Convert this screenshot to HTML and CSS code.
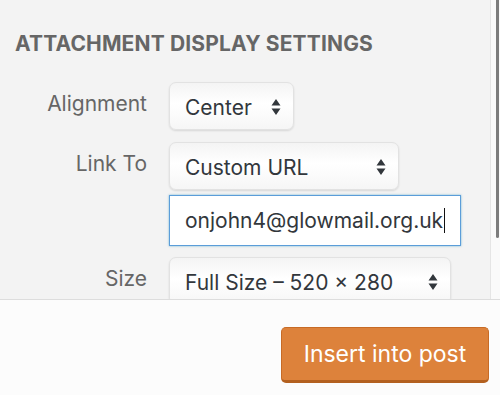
FILE: index.html
```html
<!DOCTYPE html>
<html>
<head>
	<meta name="viewport" content="width=device-width, initial-scale=1.0">
	<title>Attachment display settings</title>
	<link rel="stylesheet" href="styles.css">
</head>
<body>
	<div class="sidebar">
		<div class="settings">
			<h2>Attachment Display Settings</h2>
			<div class="row">
				<label class="label">Alignment</label>
				<div class="select select-small">
					<span>Center</span>
					<svg class="arrows" width="10" height="18" viewBox="0 0 10 18"><path d="M5 1 L9.5 7.5 H0.5 Z M5 17 L9.5 10.5 H0.5 Z" fill="#32373c"/></svg>
				</div>
			</div>
			<div class="row">
				<label class="label">Link To</label>
				<div class="field-stack">
					<div class="select select-medium">
						<span>Custom URL</span>
						<svg class="arrows" width="10" height="18" viewBox="0 0 10 18"><path d="M5 1 L9.5 7.5 H0.5 Z M5 17 L9.5 10.5 H0.5 Z" fill="#32373c"/></svg>
					</div>
					<div class="text-input"><span>onjohn4@glowmail.org.uk</span><i class="caret"></i></div>
				</div>
			</div>
			<div class="row row-size">
				<label class="label">Size</label>
				<div class="select select-large">
					<span>Full Size – 520 × 280</span>
					<svg class="arrows" width="10" height="18" viewBox="0 0 10 18"><path d="M5 1 L9.5 7.5 H0.5 Z M5 17 L9.5 10.5 H0.5 Z" fill="#32373c"/></svg>
				</div>
			</div>
		</div>
		<div class="scroll"><div class="thumb"></div></div>
	</div>
	<div class="toolbar">
		<button class="button-primary">Insert into post</button>
	</div>
</body>
</html>
```

FILE: styles.css
```css
html, body {
	margin: 0;
	padding: 0;
	height: 100%;
	overflow: hidden;
}
body {
	font-family: Inter, "Liberation Sans", sans-serif;
	background: #fcfcfc;
}
.sidebar {
	display: flex;
	height: 299px;
	overflow: hidden;
}
.settings {
	width: 491px;
	background: #f3f3f3;
	border-right: 1px solid #e5e5e5;
	box-sizing: border-box;
	padding: 0 0 0 15px;
	overflow: hidden;
}
.scroll {
	flex: 1;
	background: #fafafa;
	position: relative;
}
.thumb {
	position: absolute;
	right: 1px;
	top: 0;
	width: 3px;
	height: 238px;
	background: #7d7d7d;
	border-radius: 0 0 2px 2px;
}
h2 {
	margin: 30px 0 0 0;
	font-size: 21px;
	line-height: 28px;
	font-weight: 700;
	letter-spacing: 0.15px;
	text-transform: uppercase;
	color: #666;
}
.row {
	display: flex;
	align-items: flex-start;
	margin-top: 12px;
}
.row:first-of-type {
	margin-top: 24px;
}
.row-size {
	margin-top: 11px;
}
.label {
	width: 132px;
	text-align: right;
	padding: 9px 22px 0 0;
	font-size: 21px;
	line-height: 26px;
	color: #666;
	flex-shrink: 0;
}
.field-stack {
	display: flex;
	flex-direction: column;
	gap: 5px;
}
.select {
	display: flex;
	align-items: center;
	justify-content: space-between;
	box-sizing: border-box;
	height: 48px;
	padding: 2px 12px 0 15px;
	border: 1px solid #e2e2e2;
	border-radius: 7px;
	background: linear-gradient(#f4f4f4, #ffffff 45%, #f6f6f6);
	box-shadow: 0 1px 2px rgba(0, 0, 0, 0.12);
	font-size: 21px;
	color: #32373c;
}
.select-small {
	width: 125px;
}
.select-medium {
	width: 230px;
}
.select-large {
	width: 282px;
}
.text-input {
	display: flex;
	align-items: center;
	box-sizing: border-box;
	width: 292px;
	height: 51px;
	padding: 0 15px;
	background: #fff;
	border: 1px solid #5b9dd9;
	box-shadow: 0 0 2px rgba(30, 140, 190, 0.6);
	font-size: 21px;
	color: #32373c;
}
.caret {
	display: inline-block;
	width: 1px;
	height: 25px;
	background: #111;
	margin-left: 1px;
}
.toolbar {
	display: flex;
	justify-content: flex-end;
	border-top: 1px solid #dddddd;
	padding: 27px 11px 0 0;
}
.button-primary {
	width: 208px;
	height: 56px;
	border: 1px solid #c76b26;
	border-bottom: 3px solid #b3601f;
	border-radius: 5px;
	background: #dd823b;
	color: #fff;
	font-family: Inter, "Liberation Sans", sans-serif;
	font-size: 23px;
	cursor: pointer;
}
```
